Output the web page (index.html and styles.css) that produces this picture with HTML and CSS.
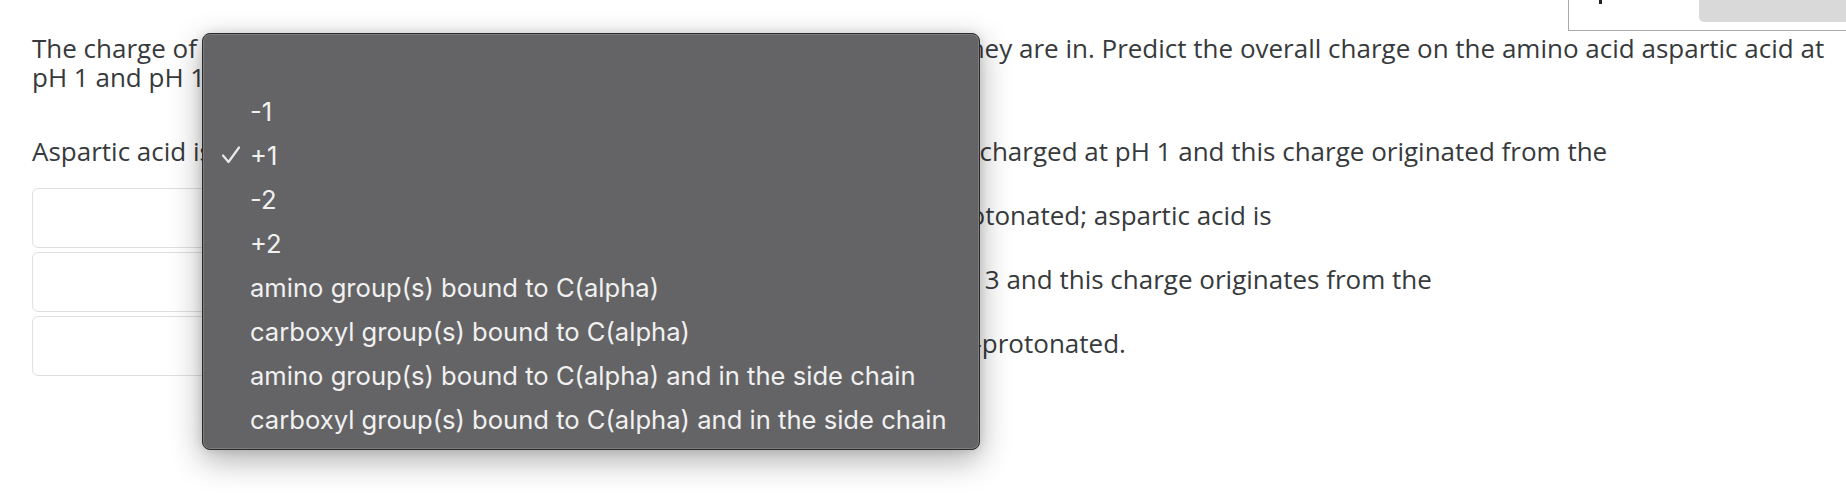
FILE: index.html
```html
<!DOCTYPE html>
<html lang="en">
<head>
<meta charset="utf-8">
<title>Aspartic acid charge</title>
<link rel="stylesheet" href="styles.css">
</head>
<body>
<div class="page">
  <div class="topbar">
    <div class="timer"><span class="timer-mark"></span><span class="timer-pill"></span></div>
  </div>
  <div class="question">
    <p class="intro">The charge of amino acids and peptides depends on the pH of each solution they are in. Predict the overall charge on the amino acid aspartic acid at pH 1 and pH 13.</p>
    <p class="answer">Aspartic acid is <span class="gap"></span> charged at pH 1 and this charge originated from the <span class="gap"></span> that are still protonated; aspartic acid is <span class="gap"></span> charged at pH 13 and this charge originates from the <span class="gap"></span> that are still de-protonated.</p>
  </div>
  <div class="popup" role="listbox">
    <div class="opt"></div>
    <div class="opt">-1</div>
    <div class="opt is-selected"><svg class="check" viewBox="0 0 20 18" width="20" height="18"><polyline points="2,9.5 7.5,16 18,1.5" fill="none" stroke="#e9e9e9" stroke-width="2.2" stroke-linecap="round" stroke-linejoin="round"/></svg>+1</div>
    <div class="opt">-2</div>
    <div class="opt">+2</div>
    <div class="opt">amino group(s) bound to C(alpha)</div>
    <div class="opt">carboxyl group(s) bound to C(alpha)</div>
    <div class="opt">amino group(s) bound to C(alpha) and in the side chain</div>
    <div class="opt">carboxyl group(s) bound to C(alpha) and in the side chain</div>
  </div>
</div>
</body>
</html>
```
FILE: styles.css
```css
html {
  overflow: hidden;
}

html, body {
  margin: 0;
  padding: 0;
  background: #ffffff;
}

body {
  min-height: 502px;
  font-family: "Open Sans", "Liberation Sans", sans-serif;
  color: #373a3c;
}

.page {
  position: relative;
  padding: 0 12px 0 32px;
}

.topbar {
  height: 31px;
  margin: 0 -36px 3px 0;
  display: flex;
  justify-content: flex-end;
}

.timer {
  width: 302px;
  height: 31px;
  box-sizing: border-box;
  border: 1.5px solid #a9a9a9;
  border-top: none;
  display: flex;
  align-items: flex-start;
}

.timer-mark {
  width: 3px;
  height: 4px;
  margin-left: 30px;
  background: #222;
}

.timer-pill {
  margin-left: auto;
  width: 170px;
  height: 22px;
  background: #d9d9d9;
  border-bottom-left-radius: 5px;
}

.question p {
  margin: 0;
  font-size: 26px;
  line-height: 29px;
}

.question .intro {
  margin-bottom: 30px;
}

.gap {
  display: inline-block;
  vertical-align: middle;
  width: 754px;
  height: 60px;
  margin: 2px 0;
  box-sizing: border-box;
  border: 1px solid #dfdfdf;
  border-radius: 6px;
  background: #fff;
}

.popup {
  position: absolute;
  left: 202px;
  top: 33px;
  width: 778px;
  height: 417px;
  box-sizing: border-box;
  padding: 11px 0 10px;
  background: #646466;
  border: 1px solid #2a2a2a;
  border-radius: 8px;
  box-shadow: inset 0 0 0 1px rgba(255, 255, 255, 0.16), 0 10px 32px rgba(0, 0, 0, 0.32), 0 0 10px rgba(0, 0, 0, 0.12);
  font-family: "Inter", "Roboto", sans-serif;
  font-size: 25.6px;
  color: #f1f1f1;
}

.opt {
  position: relative;
  height: 44px;
  display: flex;
  align-items: center;
  padding-left: 47px;
  white-space: nowrap;
}

.check {
  position: absolute;
  left: 18px;
  top: 13px;
}
```
